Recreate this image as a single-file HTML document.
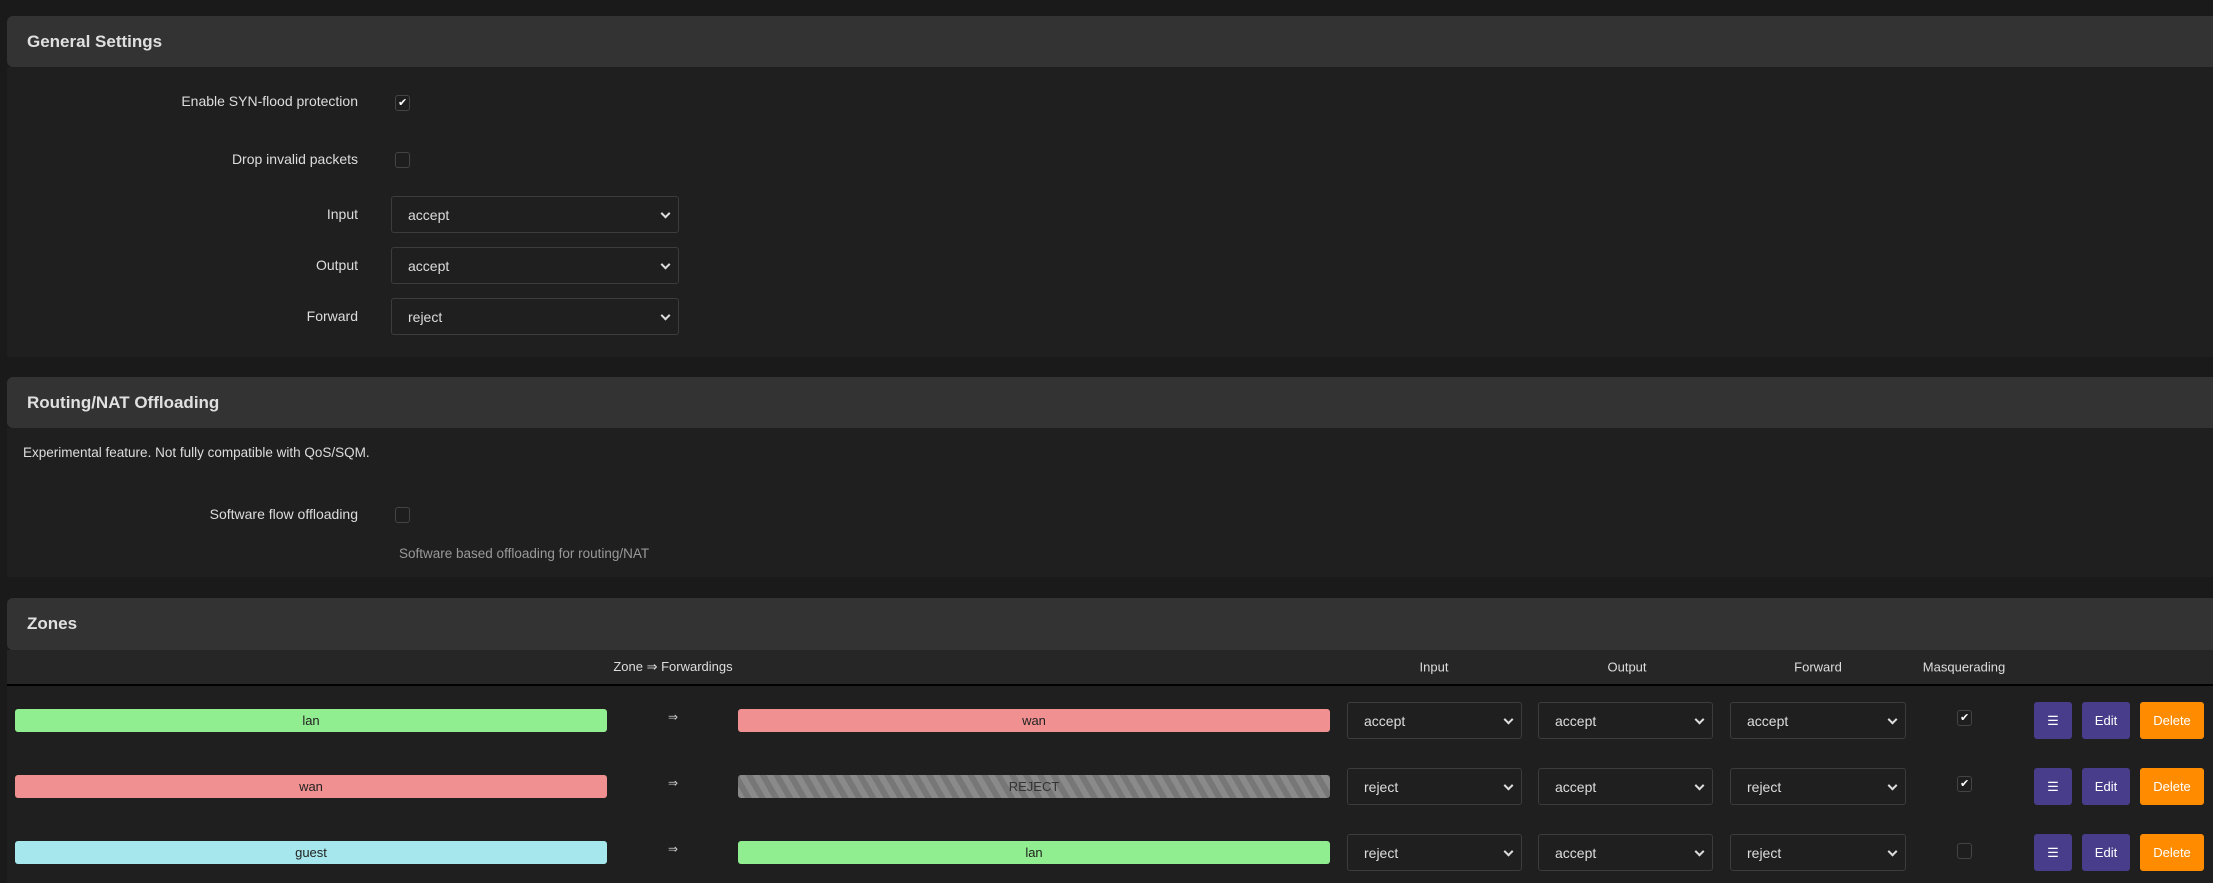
<!DOCTYPE html>
<html><head><meta charset="utf-8"><style>
*{box-sizing:border-box;margin:0;padding:0}
body{width:2213px;height:883px;background:#1a1a1a;font-family:"Liberation Sans",sans-serif;color:#ddd;position:relative;overflow:hidden}
.a{position:absolute}
.body{position:absolute;left:7px;right:0;background:#1f1f1f}
.hdr{position:absolute;left:7px;right:0;background:#333;border-radius:6px 0 0 6px;font-size:17px;font-weight:bold;color:#e0e0e0;padding-left:20px;display:flex;align-items:center}
.lbl{position:absolute;right:calc(2213px - 358px);font-size:14px;color:#ddd;transform:translateY(-50%);white-space:nowrap}
.cb{position:absolute;width:15px;height:16px;border:1px solid #444;border-radius:3px;background:#1e1e1e}
.cb.on::after{content:"✔";position:absolute;left:2px;top:0px;font-size:11px;color:#fff}
.sel{position:absolute;border:1px solid #3c3c3c;border-radius:3px;background:#1f1f1f;font-size:14px;color:#ddd;display:flex;align-items:center;padding-left:16px}
.sel::after{content:"";position:absolute;right:9px;top:50%;width:5px;height:5px;border-right:2px solid #ddd;border-bottom:2px solid #ddd;transform:translateY(-70%) rotate(45deg)}
.badge{position:absolute;height:23px;border-radius:3px;color:#222;font-size:13px;display:flex;align-items:center;justify-content:center}
.btn{position:absolute;height:37px;border-radius:3px;color:#fff;font-size:13px;display:flex;align-items:center;justify-content:center}
.th{position:absolute;top:667px;transform:translate(-50%,-50%);font-size:13px;color:#ddd;white-space:nowrap}
.arr{position:absolute;left:673px;transform:translate(-50%,-50%);font-size:12px;color:#ccc}
</style></head><body>
<div class="body" style="top:67px;height:290px"></div>
<div class="hdr" style="top:16px;height:51px">General Settings</div>
<div class="lbl" style="top:101px">Enable SYN-flood protection</div>
<div class="cb on" style="left:395px;top:95px"></div>
<div class="lbl" style="top:159px">Drop invalid packets</div>
<div class="cb" style="left:395px;top:152px"></div>
<div class="lbl" style="top:214px">Input</div>
<div class="sel" style="left:391px;top:196px;width:288px;height:37px">accept</div>
<div class="lbl" style="top:265px">Output</div>
<div class="sel" style="left:391px;top:247px;width:288px;height:37px">accept</div>
<div class="lbl" style="top:316px">Forward</div>
<div class="sel" style="left:391px;top:298px;width:288px;height:37px">reject</div>

<div class="body" style="top:428px;height:149px"></div>
<div class="hdr" style="top:377px;height:51px">Routing/NAT Offloading</div>
<div class="a" style="left:23px;top:445px;font-size:13.5px">Experimental feature. Not fully compatible with QoS/SQM.</div>
<div class="lbl" style="top:514px">Software flow offloading</div>
<div class="cb" style="left:395px;top:507px"></div>
<div class="a" style="left:399px;top:546px;font-size:13.5px;color:#999">Software based offloading for routing/NAT</div>

<div class="body" style="top:650px;height:233px"></div>
<div class="hdr" style="top:598px;height:52px">Zones</div>
<div class="a" style="left:7px;right:0;top:650px;height:36px;background:#262626;border-bottom:2px solid #000"></div>
<div class="th" style="left:673px">Zone ⇒ Forwardings</div>
<div class="th" style="left:1434px">Input</div>
<div class="th" style="left:1627px">Output</div>
<div class="th" style="left:1818px">Forward</div>
<div class="th" style="left:1964px">Masquerading</div>

<div class="badge" style="left:15px;top:709px;width:592px;background:#90ee90">lan</div>
<div class="arr" style="top:717px">⇒</div>
<div class="badge" style="left:738px;top:709px;width:592px;background:#f09090">wan</div>
<div class="sel" style="left:1347px;top:702px;width:175px;height:37px">accept</div>
<div class="sel" style="left:1538px;top:702px;width:175px;height:37px">accept</div>
<div class="sel" style="left:1730px;top:702px;width:176px;height:37px">accept</div>
<div class="cb on" style="left:1957px;top:710px"></div>
<div class="btn" style="left:2034px;top:702px;width:38px;background:#483d8b">☰</div>
<div class="btn" style="left:2082px;top:702px;width:48px;background:#483d8b">Edit</div>
<div class="btn" style="left:2140px;top:702px;width:64px;background:#ff8c00">Delete</div>

<div class="badge" style="left:15px;top:775px;width:592px;background:#f09090">wan</div>
<div class="arr" style="top:783px">⇒</div>
<div class="badge" style="left:738px;top:775px;width:592px;background:repeating-linear-gradient(60deg,#8a8a8a 0 6px,#777 6px 12px);color:#333">REJECT</div>
<div class="sel" style="left:1347px;top:768px;width:175px;height:37px">reject</div>
<div class="sel" style="left:1538px;top:768px;width:175px;height:37px">accept</div>
<div class="sel" style="left:1730px;top:768px;width:176px;height:37px">reject</div>
<div class="cb on" style="left:1957px;top:776px"></div>
<div class="btn" style="left:2034px;top:768px;width:38px;background:#483d8b">☰</div>
<div class="btn" style="left:2082px;top:768px;width:48px;background:#483d8b">Edit</div>
<div class="btn" style="left:2140px;top:768px;width:64px;background:#ff8c00">Delete</div>

<div class="badge" style="left:15px;top:841px;width:592px;background:#a5e7ec">guest</div>
<div class="arr" style="top:849px">⇒</div>
<div class="badge" style="left:738px;top:841px;width:592px;background:#90ee90">lan</div>
<div class="sel" style="left:1347px;top:834px;width:175px;height:37px">reject</div>
<div class="sel" style="left:1538px;top:834px;width:175px;height:37px">accept</div>
<div class="sel" style="left:1730px;top:834px;width:176px;height:37px">reject</div>
<div class="cb" style="left:1957px;top:843px"></div>
<div class="btn" style="left:2034px;top:834px;width:38px;background:#483d8b">☰</div>
<div class="btn" style="left:2082px;top:834px;width:48px;background:#483d8b">Edit</div>
<div class="btn" style="left:2140px;top:834px;width:64px;background:#ff8c00">Delete</div>
</body></html>
